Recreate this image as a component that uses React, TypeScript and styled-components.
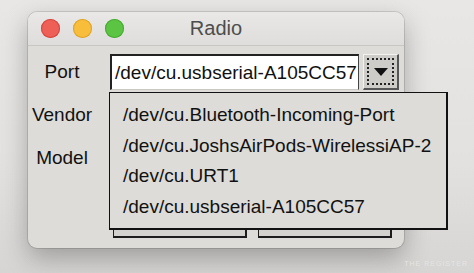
import React from 'react';
import styled, { createGlobalStyle } from 'styled-components';

const GlobalStyle = createGlobalStyle`
    html, body {
        margin: 0;
        padding: 0;
    }
    body {
        width: 474px;
        height: 273px;
        overflow: hidden;
        background: linear-gradient(180deg, #e8e7e5 0%, #e2e1df 60%, #d6d5d3 100%);
        font-family: "Liberation Sans", Arial, sans-serif;
    }
`;

const ports = [
    '/dev/cu.Bluetooth-Incoming-Port',
    '/dev/cu.JoshsAirPods-WirelessiAP-2',
    '/dev/cu.URT1',
    '/dev/cu.usbserial-A105CC57',
];

export default function App() {
    return (<>
        <GlobalStyle />
        <Stage>
            <Window>
                <TitleBar>
                    <Lights>
                        <Light color="#ee5f57" edge="#d5463f" />
                        <Light color="#f7bd3b" edge="#dea42a" />
                        <Light color="#5cc443" edge="#46ab31" />
                    </Lights>
                    <Title>Radio</Title>
                    <span />
                </TitleBar>
                <Form>
                    <Label>Port</Label>
                    <Combo>
                        <Entry>/dev/cu.usbserial-A105CC57</Entry>
                        <ArrowButton>
                            <Focus>
                                <Arrow />
                            </Focus>
                        </ArrowButton>
                    </Combo>
                    <Label>Vendor</Label>
                    <Combo>
                        <Entry />
                        <ArrowButton />
                    </Combo>
                    <Label>Model</Label>
                    <Combo>
                        <Entry />
                        <ArrowButton />
                    </Combo>
                </Form>
                <Buttons>
                    <Button />
                    <Button />
                </Buttons>
                <Menu>
                    {ports.map((p, i) =>
                        <Item key={i}>{p}</Item>
                    )}
                </Menu>
            </Window>
            <Watermark>THE REGISTER</Watermark>
        </Stage>
    </>);
}

const Stage = styled.div`
    position: relative;
    width: 474px;
    height: 273px;
    padding: 12px 0 0 28px;
    box-sizing: border-box;
`;

const Window = styled.div`
    position: relative;
    width: 376px;
    height: 236px;
    border-radius: 9px;
    background-color: #dddcd8;
    box-shadow: 0 0 0 1px rgba(0, 0, 0, 0.12), 0 10px 26px rgba(0, 0, 0, 0.28);
`;

const TitleBar = styled.div`
    height: 34px;
    display: grid;
    grid-template-columns: 1fr auto 1fr;
    align-items: center;
    padding: 0 13px;
    border-radius: 9px 9px 0 0;
    background: linear-gradient(180deg, #e9e8e6 0%, #dedddb 100%);
    border-bottom: 1px solid #c8c7c4;
    box-sizing: border-box;
`;

const Lights = styled.div`
    display: flex;
    gap: 13px;
`;

const Light = styled.div<{ color: string; edge: string }>`
    width: 19px;
    height: 19px;
    border-radius: 50%;
    background-color: ${p => p.color};
    box-shadow: inset 0 0 0 1px ${p => p.edge};
`;

const Title = styled.div`
    font-size: 20px;
    color: #4d4d4d;
`;

const Form = styled.div`
    display: grid;
    grid-template-columns: 68px 1fr;
    column-gap: 14px;
    row-gap: 7px;
    padding-top: 8px;
    align-items: center;
`;

const Label = styled.div`
    font-size: 19px;
    color: #111;
    text-align: center;
`;

const Combo = styled.div`
    display: flex;
    gap: 4px;
    height: 36px;
`;

const Entry = styled.div`
    width: 249px;
    box-sizing: border-box;
    background-color: #fff;
    border-top: 2px solid #222;
    border-left: 2px solid #222;
    border-right: 1px solid #444;
    border-bottom: 1px solid #c9c8c5;
    padding: 0 0 0 3px;
    font-size: 19px;
    line-height: 33px;
    color: #111;
    white-space: nowrap;
    overflow: hidden;
`;

const ArrowButton = styled.div`
    width: 36px;
    box-sizing: border-box;
    background-color: #cdccc9;
    border-top: 1px solid #f2f2f0;
    border-left: 1px solid #f2f2f0;
    border-right: 2px solid #555;
    border-bottom: 2px solid #555;
    padding: 3px;
    display: flex;
`;

const Focus = styled.div`
    flex: 1;
    border: 2px dotted #222;
    display: flex;
    align-items: center;
    justify-content: center;
`;

const Arrow = styled.div`
    width: 0;
    height: 0;
    border-left: 7px solid transparent;
    border-right: 7px solid transparent;
    border-top: 8px solid #111;
`;

const Buttons = styled.div`
    display: flex;
    gap: 11px;
    padding-left: 85px;
    margin-top: 22px;
`;

const Button = styled.div`
    width: 134px;
    height: 40px;
    box-sizing: border-box;
    background-color: #d3d2cf;
    border-top: 1px solid #f0f0ee;
    border-left: 1px solid #1c1c1c;
    border-right: 2px solid #1c1c1c;
    border-bottom: 2px solid #1c1c1c;
`;

const Menu = styled.div`
    position: absolute;
    left: 81px;
    top: 80px;
    width: 339px;
    box-sizing: border-box;
    padding: 7px 0 6px;
    background-color: #dddcd8;
    border: 1px solid #111;
    border-right-width: 2px;
    border-bottom-width: 2px;
`;

const Item = styled.div`
    height: 30.5px;
    line-height: 30.5px;
    padding-left: 13px;
    font-size: 19px;
    color: #111;
    white-space: nowrap;
`;

const Watermark = styled.div`
    position: absolute;
    right: 6px;
    bottom: 6px;
    font-size: 7px;
    letter-spacing: 1px;
    color: #e6e4e2;
`;
